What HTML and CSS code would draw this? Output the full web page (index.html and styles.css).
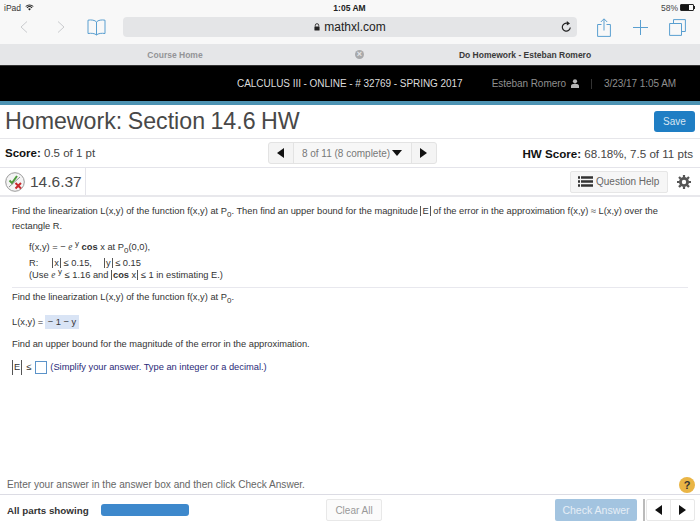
FILE: index.html
```html
<!DOCTYPE html>
<html lang="en">
<head>
<meta charset="utf-8">
<title>Do Homework</title>
<link rel="stylesheet" href="styles.css">
</head>
<body>
<div class="page">
  <div class="status">
    <div class="status-left">iPad
      <svg class="wifi" width="9" height="7" viewBox="0 0 11 9"><path d="M.6 3.200A7 7 0 0 1 10.400 3.200M2.200 4.900A4.700 4.700 0 0 1 8.800 4.900" stroke="#222" stroke-width="1.300" fill="none"/><path d="M3.700 6.400A2.500 2.500 0 0 1 7.300 6.400L5.500 8.400Z" fill="#222"/></svg>
    </div>
    <div class="status-time">1:05 AM</div>
    <div class="status-right">58%<span class="battery"><span class="battery-fill"></span></span><span class="battery-tip"></span></div>
  </div>
  <div class="toolbar">
    <div class="nav-icons">
      <svg class="ic-back" width="8" height="12" viewBox="0 0 8 12"><path d="M7 .5 L1 6 L7 11.500" fill="none" stroke="#c9cbce" stroke-width="1"/></svg>
      <svg class="ic-fwd" width="8" height="12" viewBox="0 0 8 12"><path d="M1 .5 L7 6 L1 11.500" fill="none" stroke="#c9cbce" stroke-width="1"/></svg>
      <svg class="ic-book" width="19" height="17" viewBox="0 0 19 17"><path d="M9.500 3C8 1 4 .6 1 1.200V14.500C4 14 8 14.300 9.500 16C11 14.300 15 14 18 14.500V1.200C15 .6 11 1 9.500 3ZM9.500 3V16" fill="none" stroke="#5a9fd0" stroke-width="1"/></svg>
    </div>
    <div class="address">
      <span class="address-text"><svg width="6" height="8" viewBox="0 0 7 9"><path d="M1.500 4V2.600A2 2 0 0 1 5.500 2.600V4" fill="none" stroke="#222" stroke-width="1"/><rect x=".5" y="4" width="6" height="4.500" rx=".6" fill="#222"/></svg> mathxl.com</span>
      <svg class="reload" width="11" height="12" viewBox="0 0 11 12"><path d="M9.300 6.500A4 4 0 1 1 6.500 2.300" fill="none" stroke="#222" stroke-width="1.200"/><path d="M5.800 0L9 2.400 5.800 4.600Z" fill="#222"/></svg>
    </div>
    <div class="action-icons">
      <svg width="14" height="19" viewBox="0 0 14 19"><path d="M4.500 6.500H.6V18.400H13.400V6.500H9.500M7 12.500V1M3.800 4L7 .8 10.200 4" fill="none" stroke="#5a9fd0" stroke-width="1"/></svg>
      <svg width="15" height="15" viewBox="0 0 15 15"><path d="M7.500 0V15M0 7.500H15" stroke="#5a9fd0" stroke-width="1"/></svg>
      <svg width="17" height="17" viewBox="0 0 17 17"><path d="M4.500 4.500V.6H16.400V12.500H12.500M.6 4.500H12.500V16.400H.6Z" fill="none" stroke="#5a9fd0" stroke-width="1"/></svg>
    </div>
  </div>
  <div class="tabs">
    <div class="tab tab-inactive">Course Home<span class="tab-close">×</span></div>
    <div class="tab tab-active">Do Homework - Esteban Romero</div>
  </div>
  <div class="course-bar">
    <span class="course-name">CALCULUS III - ONLINE - # 32769 - SPRING 2017</span>
    <span class="course-user">Esteban Romero
      <svg width="8" height="9" viewBox="0 0 8 9"><circle cx="4" cy="2.300" r="2.100" fill="#b5b5b5"/><path d="M0 9V7C0 5.500 1.500 4.800 4 4.800S8 5.500 8 7V9Z" fill="#b5b5b5"/></svg>
    </span>
    <span class="course-sep"></span>
    <span class="course-date">3/23/17 1:05 AM</span>
  </div>
  <div class="title-row">
    <h1 class="title">Homework: Section 14.6 HW</h1>
    <button class="save">Save</button>
  </div>
  <div class="score-row">
    <div class="score"><b>Score:</b> 0.5 of 1 pt</div>
    <div class="pager">
      <span class="pager-btn"><span class="tri-left"></span></span>
      <span class="pager-mid">8 of 11 (8 complete)<span class="tri-down"></span></span>
      <span class="pager-btn"><span class="tri-right"></span></span>
    </div>
    <div class="hw-score"><b>HW Score:</b> 68.18%, 7.5 of 11 pts</div>
  </div>
  <div class="question-row">
    <div class="question-id">
      <svg width="20" height="20" viewBox="0 0 20 20"><circle cx="10" cy="10" r="9.300" fill="#f4f4f4" stroke="#9a9a9a" stroke-width="1"/><path d="M4.500 8.500L7 11 12 4" fill="none" stroke="#4c9a3a" stroke-width="2"/><path d="M4 15L15 5" stroke="#777" stroke-width=".8"/><path d="M10.500 11L16 16.500M16 11L10.500 16.500" stroke="#c8282c" stroke-width="2"/></svg>
      <span>14.6.37</span>
    </div>
    <div class="question-tools">
      <button class="help"><svg width="15" height="11" viewBox="0 0 15 11"><path d="M0 1.500H2M3 1.500H15M0 5.500H2M3 5.500H15M0 9.500H2M3 9.500H15" stroke="#333" stroke-width="2.600"/></svg>Question Help</button>
      <svg class="gear" width="14" height="14" viewBox="0 0 14 14"><circle cx="7" cy="7" r="3.600" fill="none" stroke="#555" stroke-width="2.800"/><path d="M7 0V14M0 7H14M2 2L12 12M12 2L2 12" stroke="#555" stroke-width="2.200" stroke-dasharray="2.400 9.200 2.400 0"/></svg>
    </div>
  </div>
  <div class="content">
    <p class="intro">Find the linearization L(x,y) of the function f(x,y) at P<sub>0</sub>. Then find an upper bound for the magnitude <span class="abs">E</span> of the error in the approximation f(x,y) ≈ L(x,y) over the rectangle R.</p>
    <div class="given">
      <div class="given-first">f(x,y) = − <i class="e">e</i> <sup class="y">y</sup> <b>cos</b> x at P<sub>0</sub>(0,0),</div>
      <div>R:<span class="r-gap"></span><span class="abs">x</span> ≤ 0.15,<span class="r-gap2"></span><span class="abs">y</span> ≤ 0.15</div>
      <div>(Use <i class="e">e</i> <sup class="y">y</sup> ≤ 1.16 and <span class="abs"><b>cos</b> x</span> ≤ 1 in estimating E.)</div>
    </div>
    <p class="part">Find the linearization L(x,y) of the function f(x,y) at P<sub>0</sub>.</p>
    <p class="answer-line">L(x,y) = <span class="filled">− 1 − y</span></p>
    <p class="part2">Find an upper bound for the magnitude of the error in the approximation.</p>
    <p class="bound"><span class="abs">E</span> ≤ <span class="input"></span> <span class="hint">(Simplify your answer. Type an integer or a decimal.)</span></p>
  </div>
  <div class="instruction">
    <span>Enter your answer in the answer box and then click Check Answer.</span>
    <span class="q-badge">?</span>
  </div>
  <div class="footer">
    <b class="parts">All parts showing</b>
    <span class="progress"></span>
    <button class="clear">Clear All</button>
    <button class="check">Check Answer</button>
    <span class="foot-sep"></span>
    <span class="foot-pager">
      <span class="foot-btn"><span class="tri-left"></span></span>
      <span class="foot-btn"><span class="tri-right"></span></span>
    </span>
  </div>
</div>
</body>
</html>
```
FILE: styles.css
```css
* { box-sizing: border-box; }
html, body { margin: 0; padding: 0; }
body { font-family: "Liberation Sans", Arial, sans-serif; background: #fff; color: #222; }
.page { width: 700px; height: 525px; display: flex; flex-direction: column; overflow: hidden; }
button { font-family: inherit; }

.status { height: 15px; background: #f8f8f8; display: grid; grid-template-columns: 1fr auto 1fr; align-items: center; padding: 0 5px 0 4px; font-size: 8.500px; color: #333; }
.status-left { display: flex; align-items: center; gap: 4px; }
.status-time { font-weight: bold; font-size: 8.500px; color: #222; }
.status-right { display: flex; align-items: center; justify-content: flex-end; color: #444; }
.battery { width: 14px; height: 7px; border: 1px solid #222; margin-left: 2px; border-radius: 1px; display: block; }
.battery-fill { display: block; width: 8px; height: 5px; background: #111; }
.battery-tip { width: 1px; height: 3px; background: #222; }

.toolbar { height: 29px; background: #f8f8f8; display: flex; align-items: center; padding-bottom: 5px; }
.nav-icons { width: 123px; display: flex; align-items: center; padding-left: 20px; }
.ic-fwd { margin-left: 29px; }
.ic-book { margin-left: 22px; margin-top: 1px; }
.address { width: 454px; height: 20px; background: #e4e5e7; border-radius: 4px; position: relative; display: flex; align-items: center; justify-content: center; font-size: 12px; color: #222; }
.address-text { display: flex; align-items: center; gap: 4px; }
.reload { position: absolute; right: 5px; top: 4px; }
.action-icons { flex: 1; display: flex; align-items: center; justify-content: space-between; padding: 0 14px 0 20px; }

.tabs { height: 22px; display: flex; background: #e5e6e8; font-size: 8.500px; font-weight: bold; border-bottom: 1px solid #333; }
.tab { width: 350px; display: flex; align-items: center; justify-content: center; position: relative; }
.tab-inactive { color: #939497; }
.tab-active { color: #3a3a3a; }
.tab-close { position: absolute; right: -14px; top: 6px; width: 9px; height: 9px; border-radius: 50%; background: #a8a9ab; color: #e5e6e8; font-size: 9px; line-height: 9px; text-align: center; z-index: 1; }

.course-bar { height: 35px; background: #000; display: flex; align-items: center; font-size: 10px; letter-spacing: -.05px; padding-left: 237px; flex-shrink: 0; }
.course-name { color: #dcdcdc; }
.course-user { color: #8f8f8f; margin-left: 29px; display: flex; align-items: center; gap: 5px; }
.course-sep { width: 1px; height: 10px; background: #333; margin: 0 12px 0 12px; }
.course-date { color: #8f8f8f; }

.title-row { height: 38px; display: flex; align-items: center; justify-content: space-between; padding: 0 5px; border-top: 4px solid #4d93b3; border-bottom: 1px solid #e6e6ea; flex-shrink: 0; }
.title { margin: 0; font-size: 23.200px; font-weight: normal; color: #484848; word-spacing: -1px; }
.save { width: 41px; height: 21px; border: 0; border-radius: 3px; background: #1f7ec4; color: #d8e6f2; font-size: 10px; padding: 0; }

.score-row { height: 29px; display: grid; grid-template-columns: 1fr auto 1fr; align-items: center; padding: 0 7px 0 5px; font-size: 11.500px; color: #444; border-bottom: 1px solid #e4e4ea; flex-shrink: 0; }
.score b, .hw-score b { color: #111; }
.hw-score { text-align: right; font-size: 11.600px; }
.pager { display: flex; height: 22px; width: 169px; border: 1px solid #e3e3e3; border-radius: 3px; background: #f4f4f4; margin-left: 6px; }
.pager-btn { width: 24px; display: flex; align-items: center; justify-content: center; }
.pager-mid { flex: 1; display: flex; align-items: center; justify-content: center; background: #f7f7f7; border-left: 1px solid #e3e3e3; border-right: 1px solid #e3e3e3; font-size: 10px; color: #777; gap: 2px; white-space: nowrap; }
.tri-left { width: 0; height: 0; border-style: solid; border-width: 5px 7px 5px 0; border-color: transparent #111 transparent transparent; }
.tri-right { width: 0; height: 0; border-style: solid; border-width: 5px 0 5px 7px; border-color: transparent transparent transparent #111; }
.tri-down { width: 0; height: 0; border-style: solid; border-width: 6px 5px 0 5px; border-color: #111 transparent transparent transparent; }

.question-row { height: 29px; display: flex; justify-content: space-between; align-items: center; border-bottom: 2px solid #e8e8ec; padding-right: 9px; flex-shrink: 0; }
.question-id { height: 27px; width: 86px; display: flex; align-items: center; gap: 5px; padding-left: 5px; border-right: 1px solid #e4e4ea; font-size: 15.500px; color: #4a4a4a; }
.question-tools { display: flex; align-items: center; gap: 9px; }
.help { display: flex; align-items: center; gap: 3px; width: 98px; height: 22px; background: #f6f6f6; border: 1px solid #e6e6e6; border-radius: 2px; padding: 0 0 0 7px; font-size: 10px; color: #666; }

.content { flex: 1; padding: 7px 12px 0; font-size: 9.300px; line-height: 15px; color: #333; }
.content p { margin: 0; }
.content sub { font-size: 8px; line-height: 0; }
.content sup { line-height: 0; }
.intro { width: 660px; }
.abs { border-left: 1px solid #555; border-right: 1px solid #555; padding: 0 1px; }
.e { font-family: "Liberation Serif", serif; color: #444; }
.y { font-size: 8px; }
.given { margin: 7px 0 0 17px; line-height: 12px; }
.given-first { margin-bottom: 4px; }
.r-gap { display: inline-block; width: 14px; }
.r-gap2 { display: inline-block; width: 12px; }
.part { border-top: 1px solid #e8e8ee; margin-top: 6px !important; padding-top: 2px; }
.answer-line { margin-top: 10px !important; }
.filled { display: inline-block; background: #d9e4f5; padding: 0 3px; height: 14px; margin-left: -1px; }
.part2 { margin-top: 7px !important; }
.bound { margin-top: 8px !important; display: flex; align-items: center; gap: 4px; }
.input { width: 12px; height: 13px; border: 1px solid #5b93c9; background: #fff; display: inline-block; }
.hint { color: #2a2a78; margin-left: -1px; }

.instruction { height: 22px; display: flex; align-items: center; justify-content: space-between; padding: 2px 5px 0 7px; font-size: 10.100px; color: #666; border-bottom: 1px solid #dcdce4; flex-shrink: 0; }
.q-badge { width: 16px; height: 16px; border-radius: 50%; background: #eab545; color: #333; font-size: 11px; font-weight: bold; text-align: center; line-height: 16px; }
.footer { height: 30px; display: flex; align-items: center; padding: 0 5px 0 7px; flex-shrink: 0; }
.parts { font-size: 9.800px; color: #333; width: 93px; }
.progress { width: 88px; height: 12px; background: #3d88cc; border-radius: 3px; margin-left: 1px; }
.clear { width: 56px; height: 22px; margin-left: 137px; background: #fbfbfb; border: 1px solid #e8e8e8; border-radius: 2px; color: #999; font-size: 10px; padding: 0; }
.check { width: 82px; height: 22px; margin-left: 173px; background: #a3c4e0; border: 0; border-radius: 2px; color: #e6eef6; font-size: 10.500px; padding: 0; }
.foot-sep { width: 2px; height: 22px; background: #bbb; margin: 0 1px 0 6px; }
.foot-pager { display: flex; height: 22px; width: 49px; border: 1px solid #e8e8e8; border-radius: 2px; }
.foot-btn { flex: 1; display: flex; align-items: center; justify-content: center; }
.foot-btn + .foot-btn { border-left: 1px solid #e8e8e8; }
```
